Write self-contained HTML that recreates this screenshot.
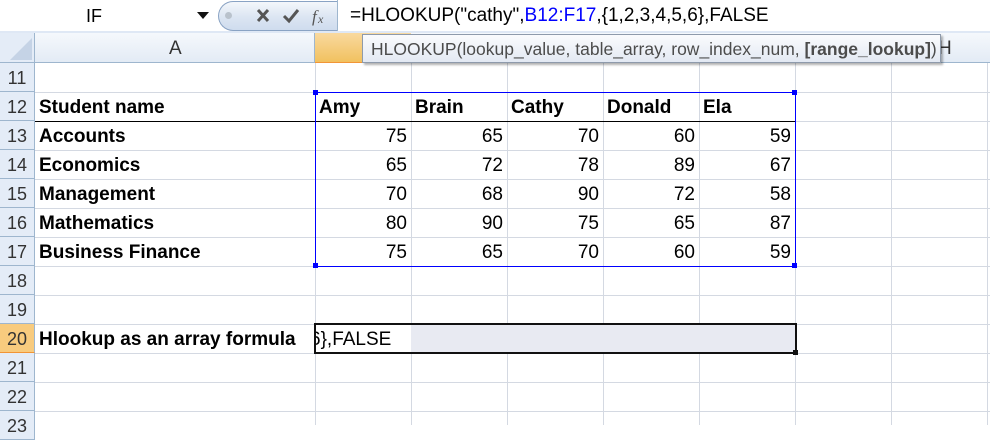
<!DOCTYPE html>
<html><head><meta charset="utf-8"><style>
body{margin:0;width:990px;height:425px;overflow:hidden;background:#fff;font-family:"Liberation Sans",Carlito,sans-serif;position:relative}
.a{position:absolute}
.t{position:absolute;font-size:19px;line-height:30px;white-space:nowrap;color:#000}
.b{font-weight:bold}
.rh{position:absolute;left:0;width:34px;height:28px;background:#e4ecf7;border-bottom:1px solid #9eb6ce;border-right:1px solid #9eb6ce;color:#333;font-size:18px;line-height:30px;text-align:center}
.n{text-align:right;width:88px}
</style></head><body>
<div class="a" style="left:0;top:0;width:990px;height:31px;background:#fff;border-bottom:1px solid #9eb6ce"></div>
<div class="a" style="left:0;top:31px;width:990px;height:2px;background:#dfe8f5"></div>
<div class="t" style="left:86px;top:1px;font-size:18px">IF</div>
<svg class="a" style="left:197px;top:12px" width="12" height="8"><path d="M0 0H12L6 7Z" fill="#111"/></svg>
<div class="a" style="left:218px;top:1px;width:119px;height:28px;border:1px solid #8aa3c4;border-right:none;border-radius:15px 0 0 15px;background:linear-gradient(#f4f7fb,#dbe5f2 55%,#cfdcee)"></div>
<div class="a" style="left:225px;top:12px;width:7px;height:7px;border-radius:50%;background:#b9c2cc"></div>
<svg class="a" style="left:255px;top:6px" width="80" height="20"><path d="M3 4L13 15M13 4L3 15" stroke="#555" stroke-width="3"/><path d="M29 10L34 15L43 4" stroke="#555" stroke-width="3" fill="none"/><text x="57" y="16" font-family="Liberation Serif" font-style="italic" font-size="17" fill="#555">f</text><text x="63" y="17" font-family="Liberation Serif" font-style="italic" font-size="12" fill="#555">x</text></svg>
<div class="a" style="left:337px;top:0;width:1px;height:31px;background:#9eb6ce"></div>
<div class="t" style="left:350px;top:1px;font-size:19px">=HLOOKUP("cathy",<span style="color:#00f">B12:F17</span>,{1,2,3,4,5,6},FALSE</div>
<div class="a" style="left:0;top:33px;width:990px;height:29px;background:linear-gradient(#f5f8fc,#e3ebf5);border-bottom:1px solid #9eb6ce"></div>
<div class="a" style="left:0;top:33px;width:34px;height:29px;background:#e4ecf7;border-right:1px solid #9eb6ce"></div>
<svg class="a" style="left:10px;top:38px" width="22" height="22"><path d="M22 0V22H0Z" fill="#c5d3e6"/></svg>
<div class="t" style="left:169px;top:34px;color:#333">A</div>
<div class="a" style="left:315px;top:33px;width:96px;height:29px;background:linear-gradient(#f9d99f,#f1c15f);border-bottom:1px solid #f29536"></div>
<div class="a" style="left:314px;top:33px;width:1px;height:30px;background:#9eb6ce"></div>
<div class="t" style="left:938px;top:34px;color:#333">H</div>
<svg class="a" style="left:0;top:63px" width="990" height="362">
<g stroke="#d4d9e2" stroke-width="1">
<path d="M35 29.5H990M35 58.5H990M35 87.5H990M35 116.5H990M35 145.5H990M35 174.5H990M35 203.5H990M35 232.5H990M35 261.5H990M35 290.5H990M35 319.5H990M35 348.5H990"/>
<path d="M315.5 0V362M411.5 0V362M507.5 0V362M603.5 0V362M699.5 0V362M795.5 0V362M891.5 0V362M987.5 0V362"/>
</g>
<path d="M35 58.5H796" stroke="#000" stroke-width="1"/>
</svg>
<div class="rh" style="top:63px">11</div><div class="rh" style="top:92px">12</div><div class="rh" style="top:121px">13</div><div class="rh" style="top:150px">14</div><div class="rh" style="top:179px">15</div><div class="rh" style="top:208px">16</div><div class="rh" style="top:237px">17</div><div class="rh" style="top:266px">18</div><div class="rh" style="top:295px">19</div><div class="rh" style="top:324px;background:#f8cb7e;border-bottom-color:#f29536">20</div><div class="rh" style="top:353px">21</div><div class="rh" style="top:382px">22</div><div class="rh" style="top:411px">23</div>
<div class="a" style="left:411px;top:325px;width:384px;height:27px;background:#e8eaf2"></div>
<div class="t b" style="left:39px;top:93px">Student name</div>
<div class="t b" style="left:319px;top:93px">Amy</div><div class="t b" style="left:415px;top:93px">Brain</div><div class="t b" style="left:511px;top:93px">Cathy</div><div class="t b" style="left:607px;top:93px">Donald</div><div class="t b" style="left:703px;top:93px">Ela</div>
<div class="t b" style="left:39px;top:122px">Accounts</div>
<div class="t b" style="left:39px;top:151px">Economics</div>
<div class="t b" style="left:39px;top:180px">Management</div>
<div class="t b" style="left:39px;top:209px">Mathematics</div>
<div class="t b" style="left:39px;top:238px">Business Finance</div>
<div class="t b" style="left:39px;top:325px">Hlookup as an array formula</div>
<div class="a" style="left:316px;top:325px;width:94px;height:29px;overflow:hidden"><div class="t" style="left:-6px;top:0">6},FALSE</div></div>
<div class="t n" style="left:319px;top:122px">75</div><div class="t n" style="left:415px;top:122px">65</div><div class="t n" style="left:511px;top:122px">70</div><div class="t n" style="left:607px;top:122px">60</div><div class="t n" style="left:703px;top:122px">59</div>
<div class="t n" style="left:319px;top:151px">65</div><div class="t n" style="left:415px;top:151px">72</div><div class="t n" style="left:511px;top:151px">78</div><div class="t n" style="left:607px;top:151px">89</div><div class="t n" style="left:703px;top:151px">67</div>
<div class="t n" style="left:319px;top:180px">70</div><div class="t n" style="left:415px;top:180px">68</div><div class="t n" style="left:511px;top:180px">90</div><div class="t n" style="left:607px;top:180px">72</div><div class="t n" style="left:703px;top:180px">58</div>
<div class="t n" style="left:319px;top:209px">80</div><div class="t n" style="left:415px;top:209px">90</div><div class="t n" style="left:511px;top:209px">75</div><div class="t n" style="left:607px;top:209px">65</div><div class="t n" style="left:703px;top:209px">87</div>
<div class="t n" style="left:319px;top:238px">75</div><div class="t n" style="left:415px;top:238px">65</div><div class="t n" style="left:511px;top:238px">70</div><div class="t n" style="left:607px;top:238px">60</div><div class="t n" style="left:703px;top:238px">59</div>
<div class="a" style="left:315px;top:92px;width:479px;height:173px;border:1px solid #00f"></div>
<div class="a" style="left:313px;top:90px;width:5px;height:5px;background:#00f"></div>
<div class="a" style="left:792px;top:90px;width:5px;height:5px;background:#00f"></div>
<div class="a" style="left:313px;top:263px;width:5px;height:5px;background:#00f"></div>
<div class="a" style="left:792px;top:263px;width:5px;height:5px;background:#00f"></div>
<div class="a" style="left:314px;top:323px;width:479px;height:27px;border:2px solid #111"></div>
<div class="a" style="left:793px;top:350px;width:5px;height:5px;background:#111"></div>
<div class="a" style="left:362px;top:34px;width:579px;height:29px;border:1px solid #8e9aab;background:linear-gradient(#fafbfd,#e3e9f3);box-shadow:2px 2px 2px rgba(0,0,0,.3);font-size:17.5px;line-height:29px;color:#4c4c4c;white-space:nowrap;padding-left:8px;box-sizing:border-box;overflow:hidden">HLOOKUP(lookup_value, table_array, row_index_num, <b>[range_lookup]</b>)</div>
</body></html>
